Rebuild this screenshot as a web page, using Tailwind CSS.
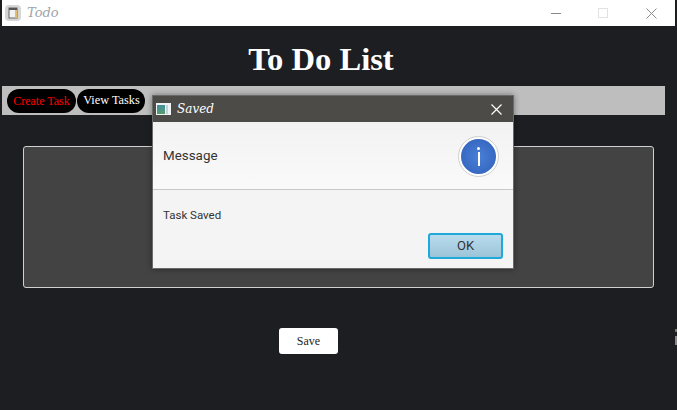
<!DOCTYPE html>
<html lang="en">
<head>
    <meta charset="UTF-8">
    <title>Todo</title>
    <script src="https://cdn.jsdelivr.net/npm/@tailwindcss/browser@4"></script>
</head>
<body class="relative w-[677px] h-[410px] overflow-hidden bg-[#1c1e22] font-['Liberation_Serif',serif]">
    <!-- window title bar -->
    <div class="flex items-center h-[26px] ml-[2px] mr-[2px] bg-white">
        <svg class="ml-[3px]" width="16" height="16" viewBox="0 0 16 16">
            <rect width="16" height="16" rx="4" fill="#d6d6d6"/>
            <rect x="4" y="3" width="8" height="10" fill="#f2f2f2" stroke="#666" stroke-width="1"/>
            <rect x="4" y="3" width="8" height="2" fill="#555"/>
            <rect x="10" y="5" width="2" height="8" fill="#e3bd6c"/>
        </svg>
        <span class="ml-[6px] text-[13px] italic text-[#a0a4aa] font-['DejaVu_Serif',serif]">Todo</span>
        <div class="flex items-center ml-auto">
            <div class="w-[10px] h-px bg-[#8a8a8a] mr-[37px]"></div>
            <div class="w-[10px] h-[10px] border border-[#e2e2e2] mr-[38px]"></div>
            <svg class="mr-[18px]" width="11" height="11" viewBox="0 0 11 11"><path d="M0.5 0.5L10.5 10.5M10.5 0.5L0.5 10.5" stroke="#8a8a8a" stroke-width="1"/></svg>
        </div>
    </div>

    <h1 class="mt-[14px] pr-[35px] text-center text-[32.6px] leading-[38px] font-bold text-white">To Do List</h1>

    <!-- tab bar -->
    <div class="flex items-center gap-px mt-[8px] ml-[2px] w-[663px] h-[29px] pl-[5px] bg-[#bebebe]">
        <div class="flex items-center justify-center w-[69px] h-[24px] rounded-full bg-black text-[12px] text-[#ff0000]">Create Task</div>
        <div class="flex items-center justify-center w-[68px] h-[24px] pl-[1px] rounded-full bg-black text-[12.3px] text-white">View Tasks</div>
    </div>

    <!-- form panel -->
    <div class="mt-[31px] ml-[23px] w-[631px] h-[142px] rounded-[3px] border border-[#d0d0d0] bg-[#434343]"></div>

    <div class="flex mt-[40px] ml-[279px]">
        <div class="flex items-center justify-center w-[59px] h-[26px] rounded-[3px] bg-white text-[12px] text-[#222]">Save</div>
    </div>

    <!-- bit of another window at the right edge -->
    <div class="absolute right-0 top-[329px] w-[2px] h-[3px] bg-[#777]"></div>
    <div class="absolute right-0 top-[336px] w-[2px] h-[9px] bg-[#888]"></div>

    <!-- saved dialog -->
    <div class="absolute left-[152px] top-[95px] w-[362px] h-[174px] border border-[#6a6a68] bg-[#f4f4f4] font-['Roboto',sans-serif] shadow-[0_0_6px_rgba(0,0,0,0.4)]">
        <div class="flex items-center h-[26px] bg-[#4d4b47]">
            <svg class="ml-[3px]" width="15" height="12" viewBox="0 0 15 12">
                <defs><linearGradient id="flag" x1="0" y1="0" x2="0" y2="1"><stop offset="0" stop-color="#3f8f9f"/><stop offset="1" stop-color="#5c9a6a"/></linearGradient></defs>
                <rect width="15" height="12" fill="#eef2f4"/>
                <rect x="1" y="2" width="8" height="9" fill="url(#flag)"/>
                <rect x="10" y="2" width="2" height="9" fill="#c4d2d8"/>
            </svg>
            <span class="ml-[6px] text-[12px] italic text-white font-['DejaVu_Serif',serif]">Saved</span>
            <svg class="ml-auto mr-[11px]" width="11" height="11" viewBox="0 0 11 11"><path d="M0.5 0.5L10.5 10.5M10.5 0.5L0.5 10.5" stroke="#fff" stroke-width="1.2"/></svg>
        </div>
        <div class="flex items-center justify-between h-[68px] pl-[10px] pr-[14px] border-b border-[#c8c8c8] bg-linear-to-b from-[#f2f2f2] to-[#fafafa]">
            <span class="mt-[1px] text-[13.4px] text-[#333]">Message</span>
            <div class="flex items-center justify-center mt-[2px] w-[41px] h-[41px] rounded-full border border-[#cfcfcf] bg-white">
                <div class="flex flex-col items-center justify-center gap-[2px] w-[35px] h-[35px] rounded-full bg-radial from-[#4a80d8] to-[#2f5fb8]">
                    <div class="w-[3px] h-[3px] rounded-full bg-white"></div>
                    <div class="w-[2px] h-[14px] bg-white"></div>
                </div>
            </div>
        </div>
        <p class="mt-[17px] ml-[10px] text-[11.5px] leading-[16px] text-[#333]">Task Saved</p>
        <div class="flex justify-end mt-[10px] mr-[10px]">
            <div class="flex items-center justify-center w-[75px] h-[26px] rounded-[3px] border-2 border-[#1fa8d8] bg-linear-to-b from-[#b9dcee] to-[#9cc4d8] text-[13px] text-[#333]">OK</div>
        </div>
    </div>
</body>
</html>
